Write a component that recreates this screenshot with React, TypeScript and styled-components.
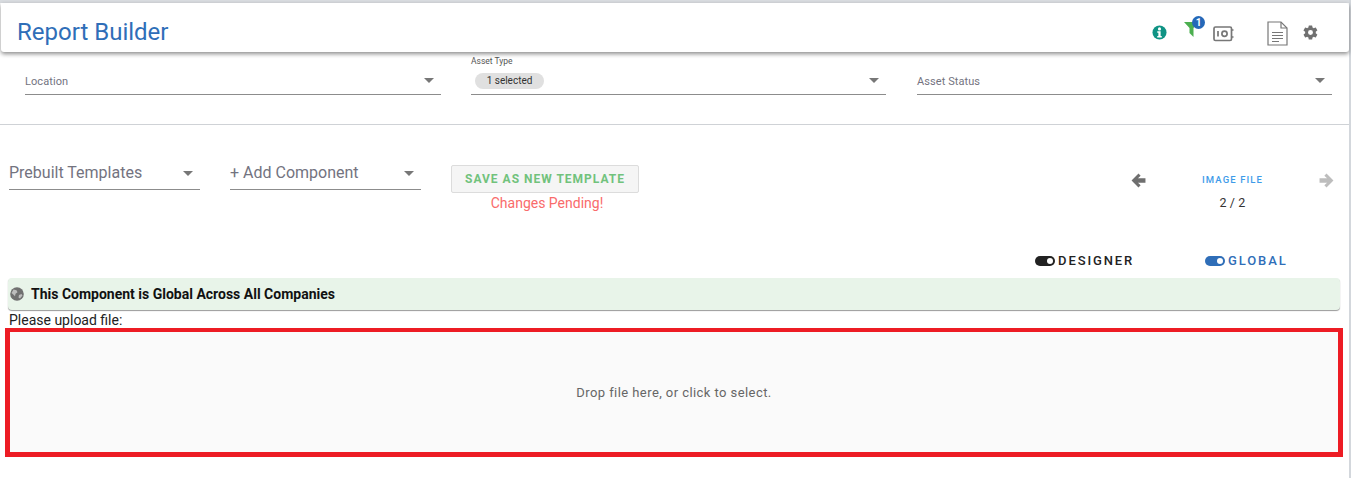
import React from "react";
import styled, { createGlobalStyle } from "styled-components";

const Global = createGlobalStyle`
  html, body { margin: 0; padding: 0; background: #fff; }
  body { font-family: Roboto, "Liberation Sans", sans-serif; overflow: hidden; }
`;

const Page = styled.div`
  width: 1349px;
  height: 478px;
  background: #fff;
  border-right: 2px solid #d3d7dc;
  display: flex;
  flex-direction: column;
`;
const TopStrip = styled.div`
  height: 3px;
  background: #d9dce0;
  flex: none;
`;
const Header = styled.header`
  height: 49px;
  margin-left: 1px;
  flex: none;
  display: flex;
  align-items: center;
  justify-content: space-between;
  background: #fff;
  border-radius: 0 3px 3px 3px;
  box-shadow: 0 2px 4px rgba(0, 0, 0, 0.45);
  position: relative;
  z-index: 1;
`;
const Title = styled.h1`
  margin: 0 0 0 16px;
  font-size: 24px;
  line-height: 28px;
  padding-top: 8px;
  font-weight: 400;
  color: #2f6eb8;
`;
const HeaderIcons = styled.div`
  display: flex;
  align-items: flex-start;
  height: 49px;
  width: 197px;
`;
const IconSlot = styled.span<{ $w: number; $top: number }>`
  display: block;
  width: ${(p) => p.$w}px;
  margin-top: ${(p) => p.$top}px;
  flex: none;
  position: relative;
  line-height: 0;
`;
const Badge = styled.span`
  position: absolute;
  left: 8px;
  top: -6px;
  width: 13px;
  height: 13px;
  border-radius: 50%;
  background: #2468b8;
  color: #fff;
  font-size: 10px;
  font-weight: 700;
  line-height: 13px;
  text-align: center;
`;
const Filters = styled.section`
  height: 72px;
  flex: none;
  display: grid;
  grid-template-columns: 416px 416px 415px;
  column-gap: 30px;
  padding: 0 17px 0 25px;
  border-bottom: 1px solid #cfd2d6;
`;
const Field = styled.div`
  height: 42px;
  border-bottom: 1px solid #8c8c8c;
  position: relative;
  display: flex;
  align-items: flex-end;
  &:nth-child(2) {
    margin-right: 1px;
  }
`;
const FieldText = styled.span`
  font-size: 11px;
  line-height: 13px;
  color: #73737f;
  padding-bottom: 6px;
  letter-spacing: 0.08px;
`;
const SmallLabel = styled.span`
  position: absolute;
  top: 4px;
  left: 0;
  font-size: 8.5px;
  line-height: 11px;
  color: #555;
`;
const Chip = styled.span`
  margin: 0 0 5px 4px;
  height: 16px;
  width: 69px;
  border-radius: 8px;
  background: #e0e0e0;
  color: #333;
  font-size: 10px;
  line-height: 16px;
  text-align: center;
`;
const Caret = styled.span<{ $right: number; $bottom: number }>`
  position: absolute;
  right: ${(p) => p.$right}px;
  bottom: ${(p) => p.$bottom}px;
  width: 0;
  height: 0;
  border-left: 5.5px solid transparent;
  border-right: 5.5px solid transparent;
  border-top: 5.5px solid #777;
`;
const Toolbar = styled.section`
  height: 127px;
  flex: none;
  display: flex;
  align-items: flex-start;
  padding: 40px 0 0 9px;
  box-sizing: border-box;
`;
const LargeSelect = styled.div`
  width: 191px;
  height: 24px;
  margin-right: 30px;
  border-bottom: 1px solid #8c8c8c;
  position: relative;
  font-size: 16px;
  line-height: 16px;
  color: #73737f;
  flex: none;
`;
const SaveGroup = styled.div`
  width: 188px;
  flex: none;
  text-align: center;
`;
const SaveButton = styled.button`
  display: block;
  width: 188px;
  height: 28px;
  padding: 0;
  background: #f5f5f5;
  border: 1px solid #dcdcdc;
  border-radius: 2px;
  color: #71c27c;
  font: 700 12px/26px Roboto, sans-serif;
  letter-spacing: 1px;
`;
const Pending = styled.div`
  color: #f96b6b;
  font-size: 14px;
  line-height: 16px;
  margin-top: 2px;
  padding-left: 4px;
`;
const Pager = styled.div`
  margin-left: auto;
  width: 203px;
  margin-right: 15px;
  display: grid;
  grid-template-columns: 17px 1fr 17px;
  align-items: start;
  justify-items: stretch;
  padding-top: 8px;
`;
const PagerEnd = styled.div`
  justify-self: end;
  line-height: 0;
`;
const PagerStart = styled.div`
  justify-self: start;
  line-height: 0;
`;
const PagerCenter = styled.div`
  text-align: center;
  padding-top: 1px;
`;
const PagerLabel = styled.div`
  font-size: 9.5px;
  line-height: 11px;
  font-weight: 500;
  letter-spacing: 1.1px;
  color: #3d9be9;
`;
const PagerCount = styled.div`
  font-size: 12.5px;
  line-height: 15px;
  margin-top: 10px;
  color: #333;
  letter-spacing: 0.1px;
`;
const ToggleRow = styled.div`
  height: 14px;
  margin-top: 2px;
  flex: none;
  display: flex;
  padding-left: 1035px;
`;
const Toggle = styled.div<{ $color: string; $w: number }>`
  width: ${(p) => p.$w}px;
  flex: none;
  display: flex;
  align-items: center;
  gap: 3px;
  color: ${(p) => p.$color};
  font-size: 13px;
  font-weight: 500;
  letter-spacing: 1.9px;
  line-height: 14px;
`;
const Pill = styled.span<{ $color: string }>`
  width: 20px;
  height: 10px;
  border-radius: 5px;
  background: ${(p) => p.$color};
  position: relative;
  flex: none;
  &::after {
    content: "";
    position: absolute;
    right: 2px;
    top: 2px;
    width: 6px;
    height: 6px;
    border-radius: 50%;
    background: #fff;
  }
`;
const Banner = styled.div`
  margin: 10px 0 0 8px;
  width: 1332px;
  height: 32px;
  flex: none;
  box-sizing: border-box;
  background: #e8f4e9;
  border-radius: 4px;
  box-shadow: 0 1px 1px rgba(0, 0, 0, 0.4);
  display: flex;
  align-items: center;
  padding-left: 2px;
  gap: 7px;
  font-size: 14px;
  font-weight: 700;
  color: #111;
`;
const UploadLabel = styled.div`
  margin: 2px 0 0 9px;
  font-size: 14px;
  line-height: 16px;
  color: #222;
  flex: none;
`;
const DropZone = styled.div`
  margin: 0 0 0 5px;
  width: 1338px;
  height: 129px;
  flex: none;
  box-sizing: border-box;
  border: 5px solid #ed1c24;
  border-top-width: 4px;
  background: #fafafa;
  color: #666;
  font-size: 13px;
  letter-spacing: 0.43px;
  display: flex;
  align-items: center;
  justify-content: center;
`;

const Info = () => (
  <svg width="15" height="15" viewBox="0 0 16 16">
    <circle cx="8" cy="8" r="7.5" fill="#0f9384" />
    <circle cx="8" cy="4.2" r="1.7" fill="#fff" />
    <path d="M5.6 6.6h3.6v5h1.2v1.6H5.6v-1.6h1.2V8.2H5.6z" fill="#fff" />
  </svg>
);
const Funnel = () => (
  <svg width="14" height="15" viewBox="0 0 14 15">
    <path d="M0 0h14L9.500 6v9L5.500 11V6z" fill="#4caf50" />
  </svg>
);
const Safe = () => (
  <svg width="21" height="16" viewBox="0 0 21 16" fill="none" stroke="#777" strokeWidth="1.7">
    <rect x="1" y="1" width="17.5" height="13.500" rx="1.5" />
    <circle cx="11.5" cy="7.700" r="2.600" />
    <path d="M5 5v5.500M19 4h1.500M19 11h1.500" />
  </svg>
);
const Doc = () => (
  <svg width="21" height="25" viewBox="0 0 21 25" fill="none" stroke="#777" strokeWidth="1.2">
    <path d="M1 1h13l6 6v17H1z" />
    <path d="M14 1v6h6" />
    <path d="M5 11.5h11M5 14.5h11M5 17.5h11M5 20.5h7" />
  </svg>
);
const Gear = () => (
  <svg width="17" height="17" viewBox="0 0 24 24" fill="#707070">
    <path d="M19.4 13c.05-.33.08-.66.08-1s-.03-.67-.08-1l2.11-1.65a.5.5 0 0 0 .12-.64l-2-3.46a.5.5 0 0 0-.61-.22l-2.49 1a7.3 7.3 0 0 0-1.73-1l-.38-2.65A.49.49 0 0 0 13.93 2h-4a.49.49 0 0 0-.49.42l-.38 2.65c-.63.26-1.2.6-1.73 1l-2.49-1a.5.5 0 0 0-.61.22l-2 3.46a.49.49 0 0 0 .12.64L4.46 11a7.9 7.9 0 0 0 0 2l-2.11 1.65a.5.5 0 0 0-.12.64l2 3.46c.12.22.38.3.61.22l2.49-1c.53.4 1.1.74 1.73 1l.38 2.65c.03.24.24.42.49.42h4c.25 0 .46-.18.49-.42l.38-2.65c.63-.26 1.2-.6 1.73-1l2.49 1c.23.08.49 0 .61-.22l2-3.46a.5.5 0 0 0-.12-.64zM12 15.500a3.500 3.500 0 1 1 0-7 3.500 3.500 0 0 1 0 7z" />
  </svg>
);
const Arrow = ({ flip, color }: { flip?: boolean; color: string }) => (
  <svg width="15" height="15" viewBox="0 0 14 14" style={flip ? { transform: "scaleX(-1)" } : undefined}>
    <path d="M7 0.500L0.500 7 7 13.500l2-2L6.500 9H13.500V5H6.500L9 2.500z" fill={color} />
  </svg>
);
const Globe = () => (
  <svg width="14" height="14" viewBox="0 0 14 14">
    <circle cx="7" cy="7" r="6.800" fill="#707070" />
    <path d="M3.500 2.500l3 .8 1 2-2 1.500-.5 2.500-2-2L1.500 6zM9 8l2.500-1 1 1.500-2.500 3-1.500-1z" fill="#bdbdbd" />
  </svg>
);

export default function App() {
  return (
    <Page>
      <Global />
      <TopStrip />
      <Header>
        <Title>Report Builder</Title>
        <HeaderIcons>
          <IconSlot $w={32} $top={22}><Info /></IconSlot>
          <IconSlot $w={29} $top={19}><Funnel /><Badge>1</Badge></IconSlot>
          <IconSlot $w={54} $top={23}><Safe /></IconSlot>
          <IconSlot $w={35} $top={18}><Doc /></IconSlot>
          <IconSlot $w={17} $top={21}><Gear /></IconSlot>
        </HeaderIcons>
      </Header>
      <Filters>
        <Field>
          <FieldText>Location</FieldText>
          <Caret $right={7} $bottom={11} />
        </Field>
        <Field>
          <SmallLabel>Asset Type</SmallLabel>
          <Chip>1 selected</Chip>
          <Caret $right={7} $bottom={11} />
        </Field>
        <Field>
          <FieldText>Asset Status</FieldText>
          <Caret $right={7} $bottom={11} />
        </Field>
      </Filters>
      <Toolbar>
        <LargeSelect>
          Prebuilt Templates
          <Caret $right={7} $bottom={13} />
        </LargeSelect>
        <LargeSelect>
          + Add Component
          <Caret $right={7} $bottom={13} />
        </LargeSelect>
        <SaveGroup>
          <SaveButton>SAVE AS NEW TEMPLATE</SaveButton>
          <Pending>Changes Pending!</Pending>
        </SaveGroup>
        <Pager>
          <PagerStart><Arrow color="#6f6f6f" /></PagerStart>
          <PagerCenter>
            <PagerLabel>IMAGE FILE</PagerLabel>
            <PagerCount>2 / 2</PagerCount>
          </PagerCenter>
          <PagerEnd><Arrow flip color="#bdbdbd" /></PagerEnd>
        </Pager>
      </Toolbar>
      <ToggleRow>
        <Toggle $color="#222" $w={170}><Pill $color="#222" />DESIGNER</Toggle>
        <Toggle $color="#2f6eb8" $w={100}><Pill $color="#2f6eb8" />GLOBAL</Toggle>
      </ToggleRow>
      <Banner><Globe />This Component is Global Across All Companies</Banner>
      <UploadLabel>Please upload file:</UploadLabel>
      <DropZone>Drop file here, or click to select.</DropZone>
    </Page>
  );
}
